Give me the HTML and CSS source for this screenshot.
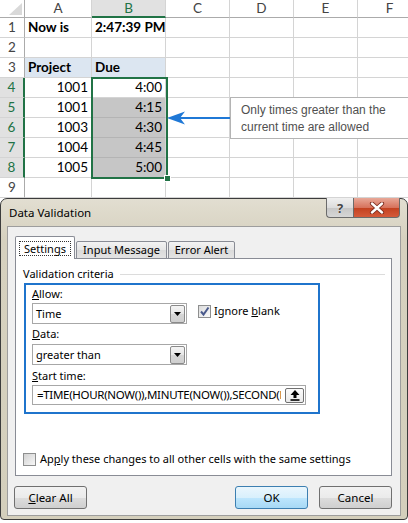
FILE: index.html
```html
<!DOCTYPE html>
<html>
<head>
<meta charset="utf-8">
<title>Data Validation</title>
<link rel="stylesheet" href="styles.css">
</head>
<body>
<div class="sheet">
  <div class="grid">
    <div class="hd corner"><svg class="tri" width="16" height="14" viewBox="0 0 16 14"><polygon points="15,1 15,13 2,13" fill="#d9d9d9"/></svg></div>
    <div class="hd col">A</div>
    <div class="hd col sel">B</div>
    <div class="hd col">C</div>
    <div class="hd col">D</div>
    <div class="hd col">E</div>
    <div class="hd col">F</div>

    <div class="hd rh">1</div>
    <div class="c b">Now is</div>
    <div class="c b r">2:47:39 PM</div>
    <div class="c"></div><div class="c"></div><div class="c"></div><div class="c"></div>

    <div class="hd rh">2</div>
    <div class="c"></div><div class="c"></div><div class="c"></div><div class="c"></div><div class="c"></div><div class="c"></div>

    <div class="hd rh">3</div>
    <div class="c b blue">Project</div>
    <div class="c b blue">Due</div>
    <div class="c"></div><div class="c"></div><div class="c"></div><div class="c"></div>

    <div class="hd rh sel">4</div>
    <div class="c r">1001</div>
    <div class="c r">4:00</div>
    <div class="c"></div><div class="c"></div><div class="c"></div><div class="c"></div>

    <div class="hd rh sel">5</div>
    <div class="c r">1001</div>
    <div class="c r gray">4:15</div>
    <div class="c"></div><div class="c"></div><div class="c"></div><div class="c"></div>

    <div class="hd rh sel">6</div>
    <div class="c r">1003</div>
    <div class="c r gray">4:30</div>
    <div class="c"></div><div class="c"></div><div class="c"></div><div class="c"></div>

    <div class="hd rh sel">7</div>
    <div class="c r">1004</div>
    <div class="c r gray">4:45</div>
    <div class="c"></div><div class="c"></div><div class="c"></div><div class="c"></div>

    <div class="hd rh sel">8</div>
    <div class="c r">1005</div>
    <div class="c r gray">5:00</div>
    <div class="c"></div><div class="c"></div><div class="c"></div><div class="c"></div>

    <div class="hd rh">9</div>
    <div class="c"></div><div class="c"></div><div class="c"></div><div class="c"></div><div class="c"></div><div class="c"></div>
  </div>

  <div class="selbox"><span class="handle"></span></div>
  <svg class="arrow" width="66" height="16" viewBox="0 0 66 16">
    <line x1="12" y1="8" x2="66" y2="8" stroke="#1f78d6" stroke-width="2"/>
    <polygon points="1,8 19,1.5 14,8 19,14.5" fill="#1f78d6"/>
  </svg>
  <div class="callout">Only times greater than the<br>current time are allowed</div>
</div>

<div class="dialog">
  <div class="titlebar">
    <span class="title">Data Validation</span>
    <div class="capbtns">
      <span class="cap help">?</span>
      <span class="cap close">
        <svg width="16" height="12" viewBox="0 0 16 12">
          <path d="M3 1.5 L13 10.5 M13 1.5 L3 10.5" stroke="#7a2a1c" stroke-width="4.2" stroke-linecap="round"/>
          <path d="M3 1.5 L13 10.5 M13 1.5 L3 10.5" stroke="#ffffff" stroke-width="2.4" stroke-linecap="round"/>
        </svg>
      </span>
    </div>
  </div>
  <div class="client">
    <div class="tabs">
      <div class="tab active"><span class="focus">Settings</span></div>
      <div class="tab t2">Input Message</div>
      <div class="tab t3">Error Alert</div>
    </div>
    <div class="panel">
      <div class="legend"><span>Validation criteria</span><span class="rule"></span></div>
      <div class="hl">
        <div class="lbl"><u>A</u>llow:</div>
        <div class="line">
          <div class="select"><span class="val">Time</span><span class="dd"><svg width="7" height="4" viewBox="0 0 7 4"><polygon points="0,0 7,0 3.5,4" fill="#000"/></svg></span></div>
          <div class="chk">
            <span class="box"><svg width="11" height="11" viewBox="0 0 11 11"><path d="M2 5.5 L4.5 8.5 L9.5 1.5" stroke="#4a5a8c" stroke-width="2" fill="none"/></svg></span>
            <span>Ignore <u>b</u>lank</span>
          </div>
        </div>
        <div class="lbl l2"><u>D</u>ata:</div>
        <div class="select s2"><span class="val">greater than</span><span class="dd"><svg width="7" height="4" viewBox="0 0 7 4"><polygon points="0,0 7,0 3.5,4" fill="#000"/></svg></span></div>
        <div class="lbl l3"><u>S</u>tart time:</div>
        <div class="input">
          <span class="formula">=TIME(HOUR(NOW()),MINUTE(NOW()),SECOND(NOW()))</span>
          <span class="ref"><svg width="10" height="11" viewBox="0 0 10 11"><polygon points="5,0 9.5,5 6.5,5 6.5,8 3.5,8 3.5,5 0.5,5" fill="#000"/><rect x="0.5" y="9.2" width="9" height="1.6" fill="#000"/></svg></span>
        </div>
      </div>
      <div class="apply">
        <span class="box empty"></span>
        <span>Ap<u>p</u>ly these changes to all other cells with the same settings</span>
      </div>
    </div>
    <div class="buttons">
      <span class="btn clear"><u>C</u>lear All</span>
      <span class="spacer"></span>
      <span class="btn ok">OK</span>
      <span class="btn">Cancel</span>
    </div>
  </div>
</div>
</body>
</html>
```

FILE: styles.css
```css
* { box-sizing: border-box; }
html, body { margin: 0; padding: 0; }
body {
  width: 408px;
  height: 523px;
  overflow: hidden;
  background: #ffffff;
  font-family: Lato, "Liberation Sans", sans-serif;
}

/* ---------- spreadsheet ---------- */
.sheet {
  position: relative;
  height: 198px;
  overflow: hidden;
}
.grid {
  display: grid;
  grid-template-columns: 25px 67px 74px 64px 64px 64px 64px;
  grid-template-rows: 18px repeat(9, 20px);
  width: 422px;
}
.grid > div {
  border-right: 1px solid #d4d4d4;
  border-bottom: 1px solid #d4d4d4;
  font-size: 13.5px;
  line-height: 19px;
  padding: 0 3px;
  white-space: nowrap;
  overflow: hidden;
  color: #000;
}
.grid > .hd {
  color: #444;
  text-align: center;
  background: #fff;
  padding: 0;
  font-size: 13.5px;
}
.grid > .corner { position: relative; border-bottom-color: #ababab; border-right-color: #ababab; }
.tri { position: absolute; right: 1px; bottom: 1px; }
.grid > .col { border-bottom-color: #ababab; line-height: 17px; }
.grid > .col.sel {
  background: #e1e1e1;
  color: #217346;
  border-bottom: 2px solid #217346;
}
.grid > .rh { border-right-color: #ababab; }
.grid > .rh.sel {
  background: #e1e1e1;
  color: #217346;
  border-right: 2px solid #217346;
}
.grid > .b { font-weight: bold; }
.grid > .r { text-align: right; }
.grid > .blue { background: #dce6f1; }
.grid > .gray { background: #c6c6c6; border-bottom-color: #b4b4b4; }

.selbox {
  position: absolute;
  left: 91px;
  top: 77px;
  width: 77px;
  height: 102px;
  border: 2px solid #217346;
}
.handle {
  position: absolute;
  right: -5px;
  bottom: -5px;
  width: 7px;
  height: 7px;
  background: #217346;
  border: 1px solid #fff;
}
.arrow {
  position: absolute;
  left: 166px;
  top: 110px;
}
.callout {
  position: absolute;
  left: 230px;
  top: 97px;
  width: 190px;
  height: 42px;
  background: #fff;
  border: 1px solid #b4b4b4;
  padding: 4px 10px;
  font-family: "Liberation Sans", Arial, sans-serif;
  font-size: 12px;
  line-height: 17px;
  color: #505050;
}

/* ---------- dialog ---------- */
.dialog {
  height: 322px;
  border: 1px solid #3c3c3c;
  border-radius: 7px 7px 4px 4px;
  background: linear-gradient(#e2ded1, #d6d1bf 40px, #d4cfbc);
  display: flex;
  flex-direction: column;
  font-family: "Noto Sans", "Open Sans", sans-serif;
  font-size: 11px;
  color: #000;
}
.titlebar {
  height: 27px;
  display: flex;
  align-items: flex-start;
}
.title {
  padding: 6px 0 0 8px;
  font-size: 11.5px;
  line-height: 16px;
  flex: 1;
}
.capbtns {
  display: flex;
  margin: -1px 7px 0 0;
}
.cap {
  height: 20px;
  display: flex;
  align-items: center;
  justify-content: center;
  border: 1px solid #6b6b6b;
  border-top: none;
}
.help {
  width: 27px;
  border-radius: 0 0 0 4px;
  border-right: none;
  background: linear-gradient(#f0f0f0, #dcdcdc 50%, #c6c6c6 51%, #d6d6d6);
  color: #444;
  font-weight: bold;
  font-size: 13px;
  text-shadow: 0 0 1px #fff;
}
.close {
  width: 47px;
  border-radius: 0 0 4px 0;
  background: linear-gradient(#e8a898, #d7735d 50%, #c2401f 51%, #d55a3a);
}

.client {
  flex: 1;
  margin: 0 6px 3px 6px;
  border: 1px solid #9d9d9d;
  background: #f0f0f0;
  padding: 8px 8px 0 7px;
  display: flex;
  flex-direction: column;
}
.tabs {
  display: flex;
  align-items: flex-end;
  height: 23px;
}
.tab {
  position: relative;
  z-index: 0;
  height: 18px;
  margin-bottom: -1px;
  border: 1px solid #898c95;
  border-radius: 2px 2px 0 0;
  background: linear-gradient(#f3f3f3, #e6e6e6 50%, #dadada 51%, #e3e3e3);
  line-height: 15px;
  text-align: center;
}
.tab + .tab { margin-left: 1px; }
.t2 { width: 91px; }
.t3 { width: 67px; }
.tab.active {
  z-index: 2;
  height: 23px;
  width: 60px;
  background: #fff;
  border-bottom: none;
  padding: 4px 3px 0 3px;
}
.focus {
  display: block;
  border: 1px dotted #333;
  line-height: 13px;
  text-align: center;
}
.panel {
  position: relative;
  z-index: 1;
  height: 218px;
  border: 1px solid #898c95;
  background: #fff;
  padding: 7px 0 8px 7px;
  display: flex;
  flex-direction: column;
}
.legend {
  display: flex;
  align-items: center;
  line-height: 16px;
  height: 16px;
}
.rule {
  flex: 1;
  height: 1px;
  background: #dcdcdc;
  margin: 0 6px;
}
.hl {
  margin: 1px 0 0 1px;
  width: 296px;
  height: 131px;
  border: 2px solid #1f74cc;
  padding: 1px 0 0 6px;
  display: flex;
  flex-direction: column;
}
.lbl {
  line-height: 16px;
  height: 16px;
}
.line {
  margin-top: 1px;
  display: flex;
  align-items: flex-start;
}
.select {
  width: 155px;
  height: 21px;
  border: 1px solid #a7a7a7;
  background: #fff;
  display: flex;
  align-items: center;
  padding: 0 1px 0 3px;
}
.val { flex: 1; line-height: 16px; }
.dd {
  width: 15px;
  height: 18px;
  border: 1px solid #8a8a8a;
  border-radius: 2px;
  background: linear-gradient(#f4f4f4, #e6e6e6 50%, #d6d6d6 51%, #cfcfcf);
  display: flex;
  align-items: center;
  justify-content: center;
}
.chk {
  margin-left: 11px;
  display: flex;
  align-items: center;
  gap: 3px;
  line-height: 16px;
}
.box {
  width: 13px;
  height: 13px;
  border: 1px solid #8e8f8f;
  background: linear-gradient(135deg, #dcdcdc, #fafafa);
  display: flex;
  align-items: center;
  justify-content: center;
}
.l2 { margin-top: 2px; }
.s2 { margin-top: 2px; }
.l3 { margin-top: 3px; }
.input {
  margin-top: 1px;
  width: 274px;
  height: 20px;
  border: 1px solid #a7a7a7;
  background: #fff;
  display: flex;
  align-items: center;
  padding: 0 1px 0 4px;
}
.formula {
  width: 244px;
  overflow: hidden;
  white-space: nowrap;
  line-height: 16px;
  font-size: 11.5px;
  letter-spacing: -0.3px;
}
.ref {
  margin-left: auto;
  width: 19px;
  height: 15px;
  border: 1px solid #707070;
  border-radius: 2px;
  background: linear-gradient(#fbfbfb, #eaeaea);
  display: flex;
  align-items: center;
  justify-content: center;
}
.apply {
  margin-top: auto;
  display: flex;
  align-items: center;
  gap: 4px;
  line-height: 16px;
}
.box.empty { background: linear-gradient(135deg, #d2d2d2, #f7f7f7); }
.buttons {
  margin-top: 10px;
  display: flex;
}
.spacer { flex: 1; }
.btn {
  width: 73px;
  height: 23px;
  border: 1px solid #707070;
  border-radius: 3px;
  background: linear-gradient(#f2f2f2, #ebebeb 50%, #dddddd 51%, #cfcfcf);
  display: flex;
  align-items: center;
  justify-content: center;
  font-size: 11.5px;
}
.btn.clear { margin-left: -1px; }
.btn.ok {
  margin-right: 11px;
  border-color: #3c7fb1;
  background: linear-gradient(#eaf6fd, #d9f0fc 50%, #bee6fd 51%, #a7d9f5);
}
```
